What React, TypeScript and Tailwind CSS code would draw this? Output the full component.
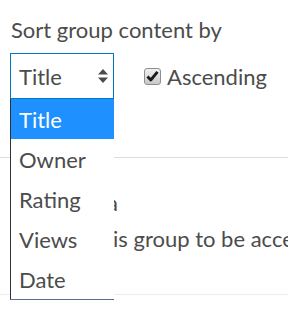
import { useState } from "react";

const options = ["Title", "Owner", "Rating", "Views", "Date"];

function UpDownArrows() {
  return (
    <svg width="12" height="16" viewBox="0 0 12 16" className="text-[#4c4c4c]">
      <path d="M6 1 L11 6.5 L1 6.5 Z" fill="currentColor" />
      <path d="M6 15 L11 9.5 L1 9.5 Z" fill="currentColor" />
    </svg>
  );
}

function CheckBox({ checked }: { checked: boolean }) {
  return (
    <span className="flex h-[17px] w-[17px] items-center justify-center rounded-[3px] border border-[#8f8f8f] bg-gradient-to-b from-[#f0f0f0] to-[#c9c9c9]">
      {checked && (
        <svg width="13" height="12" viewBox="0 0 13 12">
          <path d="M1.5 6.5 L4.8 10 L11.5 1.8" fill="none" stroke="#1a1a1a" strokeWidth="2.8" strokeLinejoin="round" />
        </svg>
      )}
    </span>
  );
}

export default function App() {
  const [selected] = useState("Title");

  return (
    <div className="relative h-[316px] w-[288px] overflow-hidden bg-white font-['Lato','Noto_Sans',sans-serif] text-[22px] text-[#4c4c4c]">
      <div className="px-[11px] pt-[17px]">
        <p className="leading-[26px]">Sort group content by</p>

        <div className="mt-[10px] flex items-center">
          <div className="relative -ml-[1px]">
            <div className="flex h-[46px] w-[104px] items-center justify-between border border-[#0079c1] pl-[8px] pr-[4px]">
              <span>{selected}</span>
              <UpDownArrows />
            </div>
            <ul className="absolute left-0 top-[46px] z-10 w-[104px] border-b border-l border-b-[#5a6f91] border-l-[#333] bg-white">
              {options.map((o) => (
                <li
                  key={o}
                  className={
                    o === selected
                      ? "flex h-[40px] items-center bg-[#1e90ff] pl-[8px] text-white"
                      : "flex h-[40px] items-center pl-[8px]"
                  }
                >
                  {o}
                </li>
              ))}
            </ul>
          </div>

          <label className="ml-[30px] flex items-center gap-[6px]">
            <CheckBox checked />
            <span>Ascending</span>
          </label>
        </div>
      </div>

      <div className="mt-[58px] border-t border-[#dcdcdc]" />

      <div className="px-[11px] pt-[32px]">
        <p className="flex whitespace-nowrap leading-[26px]">
          <span className="flex w-[107px] shrink-0 justify-end overflow-hidden">
            <span className="shrink-0">Membership criteria</span>
          </span>
        </p>
        <p className="mt-[10px] flex whitespace-nowrap leading-[26px]">
          <span className="flex w-[102px] shrink-0 justify-end overflow-hidden">
            <span className="shrink-0">Allow th</span>
          </span>
          <span>is group to be accessed by everyone</span>
        </p>
      </div>

      <div className="mt-[42px] border-t border-[#ececec]" />
    </div>
  );
}
